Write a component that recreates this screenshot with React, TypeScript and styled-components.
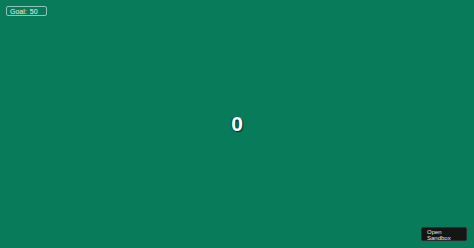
import React, { useState } from 'react';
import styled, { createGlobalStyle } from 'styled-components';

const GlobalStyle = createGlobalStyle`
  html, body {
    margin: 0;
    padding: 0;
    height: 100%;
  }
  body {
    background: #087b5b;
    font-family: "Liberation Sans", Arial, sans-serif;
  }
  #root {
    height: 100%;
  }
`;

const Page = styled.div`
  position: relative;
  height: 100vh;
  display: flex;
  align-items: center;
  justify-content: center;
`;

const GoalBox = styled.label`
  position: absolute;
  top: 6px;
  left: 6px;
  width: 41px;
  height: 10px;
  box-sizing: border-box;
  display: flex;
  align-items: center;
  gap: 3px;
  padding: 0 3px;
  border: 1px solid rgba(255, 255, 255, 0.55);
  border-radius: 2px;
  color: #e8f4ef;
  font-size: 7px;
  line-height: 1;
`;

const GoalInput = styled.input`
  width: 18px;
  padding: 0;
  border: none;
  background: transparent;
  color: #e8f4ef;
  font: inherit;
  outline: none;
`;

const Counter = styled.div`
  color: #ffffff;
  font-size: 21px;
  font-weight: 700;
  text-shadow: 1px 1px 1px #0a2a1f, -1px 0 1px rgba(0, 0, 0, 0.4);
`;

const SandboxButton = styled.a`
  position: absolute;
  right: 7px;
  bottom: 7px;
  width: 46px;
  height: 14px;
  box-sizing: border-box;
  padding: 1px 5px;
  background: #151515;
  border: 1px solid #2b2b2b;
  border-radius: 2px;
  color: #e6e6e6;
  font-size: 6px;
  line-height: 6px;
  text-decoration: none;
  overflow: hidden;
`;

export default function App() {
  const [goal, setGoal] = useState('50');
  return (
    <>
      <GlobalStyle />
      <Page>
        <GoalBox>
          Goal:
          <GoalInput value={goal} onChange={e => setGoal(e.target.value)} />
        </GoalBox>
        <Counter>0</Counter>
        <SandboxButton href="#">
          Open
          <br />
          Sandbox
        </SandboxButton>
      </Page>
    </>
  );
}
